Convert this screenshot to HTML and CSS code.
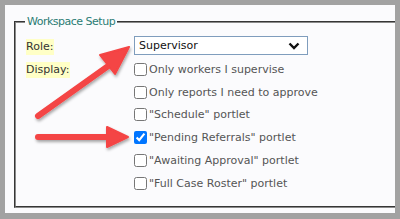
FILE: index.html
```html
<!DOCTYPE html>
<html lang="en">
<head>
    <meta charset="UTF-8">
    <title>Workspace Setup</title>
    <link rel="stylesheet" href="styles.css">
</head>
<body>
    <div class="panel">
        <fieldset class="setup">
            <legend>Workspace Setup</legend>
            <div class="form-grid">
                <div class="label"><span>Role:</span></div>
                <div class="field">
                    <div class="select">
                        <span>Supervisor</span>
                        <svg class="chevron" width="12" height="8" viewBox="0 0 12 8">
                            <path d="M1.5 1.5 L6 6 L10.5 1.5" fill="none" stroke="#111" stroke-width="2.4"/>
                        </svg>
                    </div>
                </div>

                <div class="label"><span>Display:</span></div>
                <div class="field options">
                    <label class="option"><input type="checkbox">Only workers I supervise</label>
                    <label class="option"><input type="checkbox">Only reports I need to approve</label>
                    <label class="option"><input type="checkbox">"Schedule" portlet</label>
                    <label class="option"><input type="checkbox" checked>"Pending Referrals" portlet</label>
                    <label class="option"><input type="checkbox">"Awaiting Approval" portlet</label>
                    <label class="option"><input type="checkbox">"Full Case Roster" portlet</label>
                </div>
            </div>
        </fieldset>

        <!-- callout arrows drawn over the form -->
        <svg class="arrows" width="390" height="208" viewBox="0 0 390 208">
            <defs>
                <filter id="shadow" x="-20%" y="-20%" width="140%" height="140%">
                    <feDropShadow dx="1" dy="2" stdDeviation="1.5" flood-color="#000" flood-opacity="0.35"/>
                </filter>
            </defs>
            <g fill="#f44444" stroke="#f44444" stroke-linecap="round" stroke-linejoin="round" filter="url(#shadow)">
                <line x1="33" y1="111" x2="106" y2="59" stroke-width="6"/>
                <polygon points="124,42 95,50 110,69" stroke-width="2"/>
                <line x1="33" y1="132" x2="104" y2="132" stroke-width="6"/>
                <polygon points="123,132 102,122 102,142" stroke-width="2"/>
            </g>
        </svg>
    </div>
</body>
</html>
```

FILE: styles.css
```css
body {
    margin: 0;
    background-color: #a2a2a2;
    font-family: "DejaVu Sans", Verdana, sans-serif;
    font-size: 11px;
}

.panel {
    position: relative;
    margin: 5px 5px 0 5px;
    width: 390px;
    height: 208px;
    background-color: #fbfbfd;
    overflow: hidden;
}

.setup {
    margin: 10px 0 0 9px;
    width: 420px;
    height: 181px;
    padding: 8px 0 0 10px;
    border: 2px groove #8a8a8a;
    border-right: none;
}

.setup legend {
    padding: 0 2px;
    margin-left: -1px;
    color: #2a7c74;
    font-size: 11px;
    letter-spacing: -0.5px;
}

.form-grid {
    display: grid;
    grid-template-columns: 108px 1fr;
}

.label {
    color: #333;
    font-size: 11px;
}

.label span {
    background-color: #ffffc6;
    padding: 1px 1px 2px 0;
}

.label:first-child {
    padding-top: 4px;
}

.label:nth-child(3) {
    padding-top: 8px;
}

.select {
    display: flex;
    align-items: center;
    justify-content: space-between;
    width: 174px;
    height: 19px;
    box-sizing: border-box;
    padding: 0 7px 0 4px;
    border: 1px solid #7f9dbd;
    background-color: #fff;
    color: #111;
    font-size: 11px;
}

.options {
    padding-top: 3px;
}

.option {
    display: flex;
    align-items: center;
    height: 22.8px;
    color: #555;
    white-space: nowrap;
}

.option input {
    width: 13px;
    height: 13px;
    margin: 0 2px 0 0;
}

.arrows {
    position: absolute;
    left: 0;
    top: 0;
}
```
